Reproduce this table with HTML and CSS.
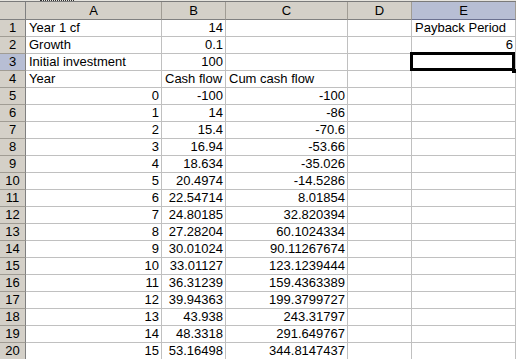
FILE: index.html
```html
<!DOCTYPE html>
<html>
<head>
<meta charset="utf-8">
<link rel="stylesheet" href="styles.css">
</head>
<body>
<div class="topstrip"><span class="remnant"></span></div>
<div class="sheet">
  <div class="hd corner"></div>
  <div class="hd col">A</div>
  <div class="hd col">B</div>
  <div class="hd col">C</div>
  <div class="hd col">D</div>
  <div class="hd col sel">E</div>

  <div class="hd rn">1</div><div class="c">Year 1 cf</div><div class="c r">14</div><div class="c"></div><div class="c"></div><div class="c">Payback Period</div>
  <div class="hd rn">2</div><div class="c">Growth</div><div class="c r">0.1</div><div class="c"></div><div class="c"></div><div class="c r">6</div>
  <div class="hd rn sel">3</div><div class="c">Initial investment</div><div class="c r">100</div><div class="c"></div><div class="c"></div><div class="c active"></div>
  <div class="hd rn">4</div><div class="c">Year</div><div class="c">Cash flow</div><div class="c">Cum cash flow</div><div class="c"></div><div class="c"></div>
  <div class="hd rn">5</div><div class="c r">0</div><div class="c r">-100</div><div class="c r">-100</div><div class="c"></div><div class="c"></div>
  <div class="hd rn">6</div><div class="c r">1</div><div class="c r">14</div><div class="c r">-86</div><div class="c"></div><div class="c"></div>
  <div class="hd rn">7</div><div class="c r">2</div><div class="c r">15.4</div><div class="c r">-70.6</div><div class="c"></div><div class="c"></div>
  <div class="hd rn">8</div><div class="c r">3</div><div class="c r">16.94</div><div class="c r">-53.66</div><div class="c"></div><div class="c"></div>
  <div class="hd rn">9</div><div class="c r">4</div><div class="c r">18.634</div><div class="c r">-35.026</div><div class="c"></div><div class="c"></div>
  <div class="hd rn">10</div><div class="c r">5</div><div class="c r">20.4974</div><div class="c r">-14.5286</div><div class="c"></div><div class="c"></div>
  <div class="hd rn">11</div><div class="c r">6</div><div class="c r">22.54714</div><div class="c r">8.01854</div><div class="c"></div><div class="c"></div>
  <div class="hd rn">12</div><div class="c r">7</div><div class="c r">24.80185</div><div class="c r">32.820394</div><div class="c"></div><div class="c"></div>
  <div class="hd rn">13</div><div class="c r">8</div><div class="c r">27.28204</div><div class="c r">60.1024334</div><div class="c"></div><div class="c"></div>
  <div class="hd rn">14</div><div class="c r">9</div><div class="c r">30.01024</div><div class="c r">90.11267674</div><div class="c"></div><div class="c"></div>
  <div class="hd rn">15</div><div class="c r">10</div><div class="c r">33.01127</div><div class="c r">123.1239444</div><div class="c"></div><div class="c"></div>
  <div class="hd rn">16</div><div class="c r">11</div><div class="c r">36.31239</div><div class="c r">159.4363389</div><div class="c"></div><div class="c"></div>
  <div class="hd rn">17</div><div class="c r">12</div><div class="c r">39.94363</div><div class="c r">199.3799727</div><div class="c"></div><div class="c"></div>
  <div class="hd rn">18</div><div class="c r">13</div><div class="c r">43.938</div><div class="c r">243.31797</div><div class="c"></div><div class="c"></div>
  <div class="hd rn">19</div><div class="c r">14</div><div class="c r">48.3318</div><div class="c r">291.649767</div><div class="c"></div><div class="c"></div>
  <div class="hd rn">20</div><div class="c r">15</div><div class="c r">53.16498</div><div class="c r">344.8147437</div><div class="c"></div><div class="c"></div>
</div>
</body>
</html>
```

FILE: styles.css
```css
html, body {
  margin: 0;
  padding: 0;
  background: #ffffff;
  overflow: hidden;
}
body {
  width: 516px;
  height: 359px;
  font-family: "Liberation Sans", Arial, sans-serif;
  font-size: 13px;
  color: #000;
}
.topstrip {
  position: relative;
  height: 1px;
  background: #e6e4de;
  border-bottom: 1px solid #7a7a7a;
}
.remnant {
  position: absolute;
  left: 40px;
  top: 0;
  width: 34px;
  height: 1px;
  border-top: 1px dotted #303030;
}
.sheet {
  display: grid;
  grid-template-columns: 26px 136px 64px 122px 64px 104px;
  grid-template-rows: 18px;
  grid-auto-rows: 17px;
}
.sheet > div {
  box-sizing: border-box;
  border-right: 1px solid #c0c0c0;
  border-bottom: 1px solid #c0c0c0;
  line-height: 16px;
  white-space: nowrap;
  overflow: hidden;
}
.hd {
  background: #d4d0c8;
  text-align: center;
}
.sheet > .hd {
  border-right-color: #a09c94;
  border-bottom-color: #a09c94;
}
.sheet > .col {
  line-height: 17px;
  border-bottom-color: #808080;
}
.sheet > .rn {
  border-right-color: #808080;
}
.sheet > .corner {
  border-bottom-color: #808080;
  border-right-color: #808080;
}
.sheet > .hd.sel {
  background: #b7bed4;
}
.sheet > .col.sel {
  border-bottom-color: #6a7090;
}
.c {
  padding: 0 3px;
}
.r {
  text-align: right;
  padding: 0 2px 0 3px;
}
.sheet > .active {
  position: relative;
  overflow: visible;
}
.active::after {
  content: "";
  position: absolute;
  left: -2px;
  top: -2px;
  right: 0;
  bottom: -1px;
  border: 3px solid #000;
  box-sizing: border-box;
}
.active::before {
  content: "";
  position: absolute;
  right: -1px;
  bottom: -3px;
  width: 4px;
  height: 4px;
  background: #000;
  z-index: 2;
}
```
